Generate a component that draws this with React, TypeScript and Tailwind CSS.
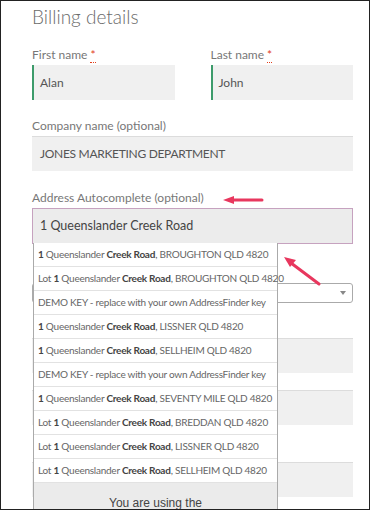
const items: [string, string, string][] = [
  ["", "BROUGHTON QLD 4820", "a"],
  ["Lot ", "BROUGHTON QLD 4820", "a"],
  ["", "", "demo"],
  ["", "LISSNER QLD 4820", "a"],
  ["", "SELLHEIM QLD 4820", "a"],
  ["", "", "demo"],
  ["", "SEVENTY MILE QLD 4820", "a"],
  ["Lot ", "BREDDAN QLD 4820", "a"],
  ["Lot ", "LISSNER QLD 4820", "a"],
  ["Lot ", "SELLHEIM QLD 4820", "a"],
];

function Req() {
  return (
    <abbr className="ml-[3px] text-[#e2401c] no-underline border-b border-dotted border-[#e2401c] leading-none">
      *
    </abbr>
  );
}

export default function App() {
  return (
    <div className="relative h-[510px] w-[370px] overflow-hidden border border-[#222] bg-white font-['Lato','Liberation_Sans',sans-serif]">
      <div className="flex flex-col pl-[31px] pr-[16px] pt-[3px]">
        <h3 className="text-[19px] font-light leading-[26px] text-[#6b6b6b]">Billing details</h3>

        <div className="mt-[16px] grid grid-cols-2 gap-x-[36px]">
          <div className="flex flex-col">
            <label className="h-[19px] text-[12px] leading-[18px] text-[#777]">
              First name<Req />
            </label>
            <div className="flex h-[35px] items-center border-l-2 border-[#3d9b6b] bg-[#f0f0f0] pl-[6px] text-[12px] text-[#555]">
              Alan
            </div>
          </div>
          <div className="flex flex-col">
            <label className="h-[19px] text-[12px] leading-[18px] text-[#777]">
              Last name<Req />
            </label>
            <div className="flex h-[35px] items-center border-l-2 border-[#3d9b6b] bg-[#f0f0f0] pl-[6px] text-[12px] text-[#555]">
              John
            </div>
          </div>
        </div>

        <label className="mt-[17px] h-[19px] text-[12px] leading-[18px] text-[#777]">Company name (optional)</label>
        <div className="flex h-[35px] items-center border-t border-[#dcdcdc] bg-[#f0f0f0] pl-[8px] text-[12px] tracking-[-0.3px] text-[#555]">
          JONES MARKETING DEPARTMENT
        </div>

        <label className="mt-[18px] h-[19px] text-[12px] leading-[18px] text-[#777]">
          Address Autocomplete (optional)
        </label>
        <div className="flex h-[36px] items-center border border-[#c6a2bf] bg-[#ececec] pl-[7px] text-[12.5px] text-[#444]">
          1 Queenslander Creek Road
        </div>

        <div className="mt-[39px] flex h-[20px] items-center justify-end rounded-[3px] border border-[#aaa] pr-[6px]">
          <span className="h-0 w-0 border-x-[3px] border-t-[4px] border-x-transparent border-t-[#888]" />
        </div>

        <div className="mt-[35px] h-[35px] border-t border-[#dcdcdc] bg-[#f0f0f0]" />
        <div className="mt-[17px] h-[35px] border-t border-[#dcdcdc] bg-[#f0f0f0]" />
        <div className="mt-[37px] h-[35px] border-t border-[#dcdcdc] bg-[#f0f0f0]" />
      </div>

      <div className="absolute left-[32px] top-[242px] w-[245px] border-x border-[#aaa] bg-white">
        {items.map(([pre, place, kind], i) => (
          <div
            key={i}
            className="flex h-[24px] items-center border-b border-[#e2e2e2] pl-[4px] text-[10px] tracking-[-0.25px] text-[#666] whitespace-nowrap"
          >
            {kind === "demo" ? (
              <span>DEMO KEY - replace with your own AddressFinder key</span>
            ) : (
              <span>
                {pre}
                <b className="text-[#444]">1</b> Queenslander <b className="text-[#444]">Creek Road</b>, {place}
              </span>
            )}
          </div>
        ))}
        <div className="h-[40px] bg-[#ebebeb] pt-[11px] text-center font-['Liberation_Sans',sans-serif] text-[12px] text-[#444]">
          You are using the
        </div>
      </div>

      <svg className="absolute left-0 top-0" width="370" height="510" viewBox="0 0 370 510">
        <line x1="261" y1="199" x2="231" y2="199" stroke="#e8375e" strokeWidth="3" strokeLinecap="round" />
        <polygon points="222,199 233,195 233,203" fill="#e8375e" />
        <line x1="318" y1="283" x2="290" y2="262" stroke="#e8375e" strokeWidth="3" strokeLinecap="round" />
        <polygon points="283,256 295,259 289,266" fill="#e8375e" />
      </svg>
    </div>
  );
}
